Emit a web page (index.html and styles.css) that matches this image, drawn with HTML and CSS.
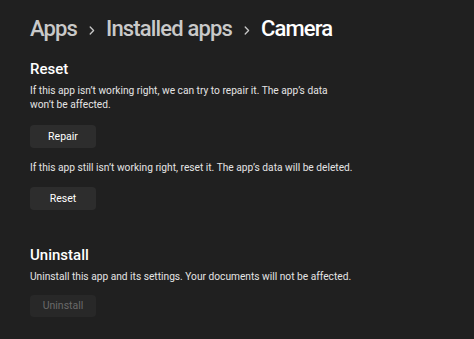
FILE: index.html
```html
<!DOCTYPE html>
<html lang="en">
<head>
<meta charset="utf-8">
<title>Camera - App settings</title>
<link rel="stylesheet" href="styles.css">
</head>
<body>
<main class="page">
  <nav class="breadcrumb">
    <span class="crumb">Apps</span>
    <svg class="chev" width="6" height="9" viewBox="0 0 6 9"><path d="M1.2 1 L4.6 4.5 L1.2 8" fill="none" stroke="#c8c8c8" stroke-width="1.3" stroke-linecap="round" stroke-linejoin="round"/></svg>
    <span class="crumb">Installed apps</span>
    <svg class="chev" width="6" height="9" viewBox="0 0 6 9"><path d="M1.2 1 L4.6 4.5 L1.2 8" fill="none" stroke="#c8c8c8" stroke-width="1.3" stroke-linecap="round" stroke-linejoin="round"/></svg>
    <span class="crumb current">Camera</span>
  </nav>

  <section class="section reset">
    <h2 class="heading">Reset</h2>
    <p class="desc two-line">If this app isn’t working right, we can try to repair it. The app’s data<br>won’t be affected.</p>
    <button class="btn btn-repair">Repair</button>
    <p class="desc desc-reset">If this app still isn’t working right, reset it. The app’s data will be deleted.</p>
    <button class="btn btn-reset">Reset</button>
  </section>

  <section class="section uninstall">
    <h2 class="heading">Uninstall</h2>
    <p class="desc desc-uninstall">Uninstall this app and its settings. Your documents will not be affected.</p>
    <button class="btn btn-uninstall" disabled>Uninstall</button>
  </section>
</main>
</body>
</html>
```

FILE: styles.css
```css
html, body {
  margin: 0;
  padding: 0;
  background: #202020;
  height: 100%;
}

body {
  font-family: Roboto, "Open Sans", sans-serif;
  color: #ffffff;
}

.page {
  padding: 15px 30px 0 30px;
  display: flex;
  flex-direction: column;
  align-items: flex-start;
}

.breadcrumb {
  display: flex;
  align-items: center;
  height: 28px;
  font-size: 22px;
  font-weight: 500;
  line-height: 28px;
  letter-spacing: -0.85px;
}

.crumb {
  color: #c9c9c9;
}

.crumb.current {
  color: #ffffff;
}

.chev {
  margin: 2px 11px 0 12px;
}

.section {
  display: flex;
  flex-direction: column;
  align-items: flex-start;
}

.reset {
  margin-top: 16px;
}

.uninstall {
  margin-top: 34.5px;
}

.heading {
  margin: 0;
  font-size: 15px;
  line-height: 20px;
  font-weight: 500;
  color: #ffffff;
}

.desc {
  margin: 5px 0 0 0;
  font-size: 10.2px;
  line-height: 13.5px;
  color: #e4e4e4;
}

.btn {
  margin-top: 14px;
  width: 66px;
  height: 23px;
  border: none;
  border-radius: 4px;
  background: #2d2d2d;
  color: #ffffff;
  font-family: Roboto, "Open Sans", sans-serif;
  font-size: 10.5px;
  padding: 0;
}

.desc-reset {
  margin-top: 12.5px;
}

.btn-reset {
  margin-top: 13px;
}

.desc-uninstall {
  margin-top: 5.5px;
}

.btn-uninstall {
  margin-top: 11px;
  height: 22.5px;
  background: #282828;
  color: #6a6a6a;
}
```
